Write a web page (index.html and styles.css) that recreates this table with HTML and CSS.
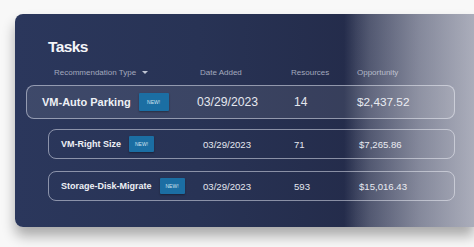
FILE: index.html
```html
<!DOCTYPE html>
<html>
<head>
<meta charset="utf-8">
<link rel="stylesheet" href="styles.css">
</head>
<body>
<div class="stage">
  <div class="card">
    <h1 class="title">Tasks</h1>
    <div class="head">
      <span class="h-type">Recommendation Type <span class="caret"></span></span>
      <span class="h-date">Date Added</span>
      <span class="h-res">Resources</span>
      <span class="h-opp">Opportunity</span>
    </div>
    <div class="row row-main">
      <span class="name">VM-Auto Parking <span class="badge">NEW!</span></span>
      <span class="date">03/29/2023</span>
      <span class="res">14</span>
      <span class="opp">$2,437.52</span>
    </div>
    <div class="row row-sub">
      <span class="name">VM-Right Size <span class="badge">NEW!</span></span>
      <span class="date">03/29/2023</span>
      <span class="res">71</span>
      <span class="opp">$7,265.86</span>
    </div>
    <div class="row row-sub">
      <span class="name">Storage-Disk-Migrate <span class="badge">NEW!</span></span>
      <span class="date">03/29/2023</span>
      <span class="res">593</span>
      <span class="opp">$15,016.43</span>
    </div>
    <div class="fade"></div>
  </div>
</div>
</body>
</html>
```
FILE: styles.css
```css
* { box-sizing: border-box; }
html, body { margin: 0; padding: 0; }
body {
  width: 474px;
  height: 247px;
  overflow: hidden;
  background: #f8f8f8;
  font-family: "Liberation Sans", Arial, sans-serif;
}
.stage {
  padding: 14px 0 0 15px;
}
.card {
  position: relative;
  width: 459px;
  height: 213px;
  border-radius: 8px 0 0 8px;
  background: linear-gradient(90deg, #2b375c 0%, #283355 40%, #242c4b 73%, #2a3152 100%);
  box-shadow: 0 9px 13px rgba(0,0,0,0.32);
  padding: 24px 0 0 11px;
  overflow: hidden;
}
.title {
  margin: 0 0 0 22px;
  font-size: 15.5px;
  line-height: 18px;
  font-weight: bold;
  color: #f4f5f9;
  letter-spacing: -0.6px;
}
.head {
  display: flex;
  align-items: center;
  margin: 10px 0 0 28px;
  height: 12px;
  font-size: 8px;
  color: #a3a9bd;
}
.h-type { width: 146px; display: flex; align-items: center; gap: 6px; }
.caret {
  display: inline-block;
  width: 0; height: 0;
  border-left: 3px solid transparent;
  border-right: 3px solid transparent;
  border-top: 3.5px solid #c0c5d4;
}
.h-date { width: 91px; }
.h-res { width: 66px; }
.row {
  display: flex;
  align-items: center;
  border: 1px solid rgba(220,224,236,0.55);
  border-radius: 8px;
  color: #e4e7ef;
}
.row-main {
  margin: 7px 0 0 0;
  width: 429px;
  height: 34px;
  padding-left: 15px;
  background: rgba(255,255,255,0.09);
}
.row-main .name { width: 155px; font-size: 11px; }
.row-main .date { width: 97px; font-size: 12.2px; }
.row-main .res { width: 63px; font-size: 12px; }
.row-main .opp { font-size: 11.8px; }
.row-sub {
  margin: 10px 0 0 22px;
  width: 407px;
  height: 30px;
  padding-left: 12px;
}
.row-sub + .row-sub { margin-top: 12px; }
.row-sub .name { width: 142px; font-size: 9px; }
.row-sub .date { width: 91px; font-size: 9.6px; }
.row-sub .res { width: 65px; font-size: 9.6px; }
.row-sub .opp { font-size: 9.6px; }
.name {
  display: flex;
  align-items: center;
  font-weight: bold;
  color: #eef0f5;
  white-space: nowrap;
}
.badge {
  display: inline-flex;
  align-items: center;
  justify-content: center;
  background: #1b6ea3;
  color: #cfe2ef;
  font-size: 5px;
  font-weight: normal;
  border-radius: 1px;
  box-shadow: 0 1px 2px rgba(0,0,0,0.35);
}
.row-main .badge { width: 30px; height: 18px; margin-left: 8px; }
.row-sub .badge { width: 25px; height: 16px; margin-left: 8px; }
.fade {
  position: absolute;
  top: 0; bottom: 0; right: 0;
  width: 130px;
  background: linear-gradient(90deg, rgba(246,246,248,0) 0%, rgba(246,246,248,0.12) 10%, rgba(246,246,248,0.22) 20%, rgba(246,246,248,0.45) 58%, rgba(246,246,248,0.63) 100%);
  pointer-events: none;
}
```
